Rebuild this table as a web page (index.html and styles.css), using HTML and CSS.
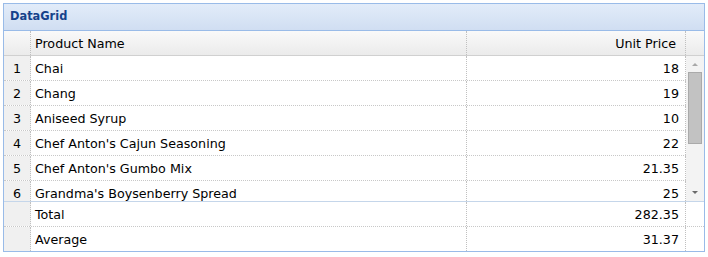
FILE: index.html
```html
<!DOCTYPE html>
<html>
<head>
<meta charset="utf-8">
<link rel="stylesheet" href="styles.css">
</head>
<body>
<div class="grid">
  <div class="title">DataGrid</div>
  <div class="head">
    <div class="c num"></div>
    <div class="c name">Product Name</div>
    <div class="c price">Unit Price</div>
    <div class="c sb"></div>
  </div>
  <div class="body">
    <div class="rows">
      <div class="row"><div class="c num">1</div><div class="c name">Chai</div><div class="c price">18</div></div>
      <div class="row"><div class="c num">2</div><div class="c name">Chang</div><div class="c price">19</div></div>
      <div class="row"><div class="c num">3</div><div class="c name">Aniseed Syrup</div><div class="c price">10</div></div>
      <div class="row"><div class="c num">4</div><div class="c name">Chef Anton's Cajun Seasoning</div><div class="c price">22</div></div>
      <div class="row"><div class="c num">5</div><div class="c name">Chef Anton's Gumbo Mix</div><div class="c price">21.35</div></div>
      <div class="row"><div class="c num">6</div><div class="c name">Grandma's Boysenberry Spread</div><div class="c price">25</div></div>
    </div>
    <div class="scroll">
      <div class="arrow up"></div>
      <div class="track"><div class="thumb"></div></div>
      <div class="arrow down"></div>
    </div>
  </div>
  <div class="foot">
    <div class="row"><div class="c num"></div><div class="c name">Total</div><div class="c price">282.35</div><div class="c sb"></div></div>
    <div class="row last"><div class="c num"></div><div class="c name">Average</div><div class="c price">31.37</div><div class="c sb"></div></div>
  </div>
</div>
</body>
</html>
```

FILE: styles.css
```css
html, body { margin: 0; padding: 0; background: #fff; }
body { padding: 3px 3px 0 3px; font-family: "DejaVu Sans", Verdana, sans-serif; font-size: 12.7px; color: #000; }
.grid { width: 700px; border: 1px solid #99bbe8; }
.title { height: 26px; line-height: 25px; padding-left: 6px; font-weight: bold; font-size: 11.4px; color: #15428b;
  background: linear-gradient(#e2ecf9, #d0def2); border-bottom: 1px solid #99bbe8; }
.head { display: flex; height: 24px; background: linear-gradient(#f9f9f9, #ebebeb); border-bottom: 1px solid #d0d0d0; }
.c { box-sizing: border-box; height: 100%; display: flex; align-items: center; white-space: nowrap; }
.num { width: 27px; justify-content: center; background: #f0f0f0; border-right: 1px dotted #c0c0c0; }
.head .num { background: transparent; }
.name { width: 436px; padding-left: 4px; border-right: 1px dotted #c0c0c0; }
.price { width: 219px; justify-content: flex-end; padding-right: 6px; border-right: 1px dotted #c0c0c0; }
.head .price { padding-right: 9px; }
.sb { width: 18px; }
.body { display: flex; height: 145px; overflow: hidden; }
.rows { width: 682px; flex: none; }
.row { display: flex; height: 25px; border-bottom: 1px dotted #c8c8c8; box-sizing: border-box; }
.row.last { border-bottom: none; }
.scroll { width: 18px; display: flex; flex-direction: column; background: #f3f3f3; }
.arrow { height: 16px; position: relative; flex: none; }
.arrow::after { content: ""; position: absolute; left: 6px; width: 0; height: 0; border-left: 3px solid transparent; border-right: 3px solid transparent; }
.up::after { top: 7px; border-bottom: 3px solid #a8a8a8; }
.down::after { top: 6px; border-top: 3px solid #6a6a6a; }
.track { flex: 1; padding: 0 2px; }
.thumb { height: 72px; background: #c2c2c2; border: 1px solid #aaa; box-sizing: border-box; }
.foot { border-top: 1px solid #c5d6ea; }
.foot .row:first-child { border-bottom: 1px dotted #c8c8c8; }
.foot .row.last { height: 24px; }
```
